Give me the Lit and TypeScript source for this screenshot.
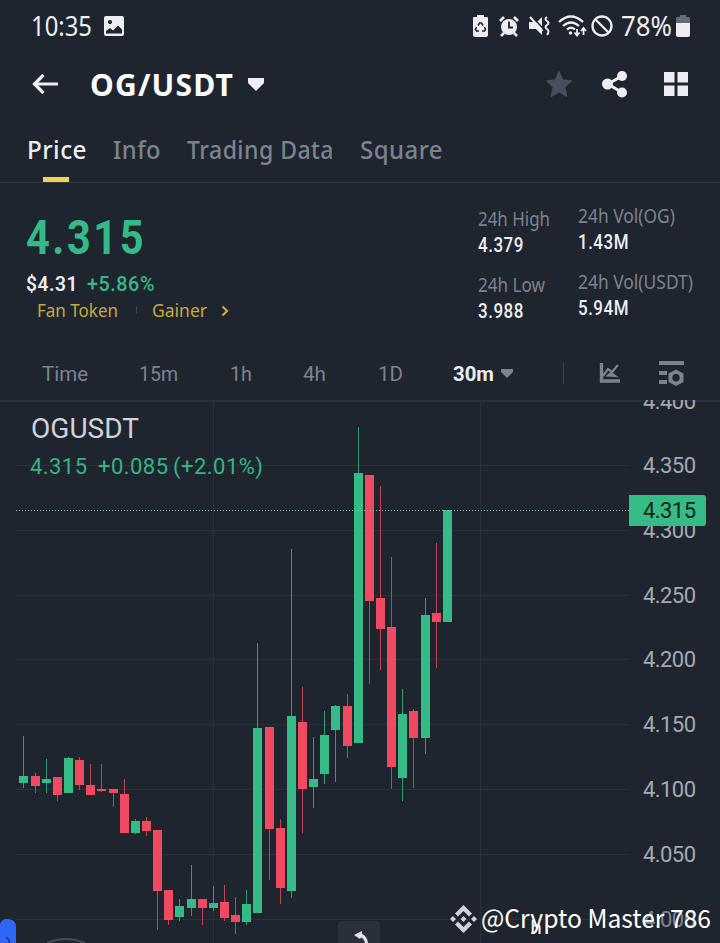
import { LitElement, html, svg, css, type TemplateResult } from "lit";
import { customElement } from "lit/decorators.js";

/** A line of text fitted to a width; the box is as high as its capitals, so its bottom is the baseline. */
const fit = (text: string, width: number, cap: number, cls = "") => html`
  <svg class="fit ${cls}" width=${width} height=${cap}>
    <text x="-1" y=${cap} font-size=${cap / 0.714} textLength=${width} lengthAdjust="spacingAndGlyphs">${text}</text>
  </svg>`;

const icon = (w: number, h: number, body: TemplateResult, cls = "") => html`
  <svg class="icon ${cls}" width=${w} height=${h} viewBox="0 0 ${w} ${h}">${body}</svg>`;

type Candle = [x: number, up: 0 | 1, top: number, bottom: number, high: number, low: number];

const CANDLES: Candle[] = [
  [19, 1, 776, 783, 736, 788], [31, 0, 776, 786, 773, 793], [42, 1, 779, 783, 759, 793],
  [53, 0, 777, 795, 777, 801], [64, 1, 758, 793, 757, 793], [75, 0, 760, 785, 757, 790],
  [86, 0, 785, 795, 764, 795], [97, 0, 789, 791, 764, 792], [109, 0, 789, 793, 789, 807],
  [120, 0, 794, 833, 779, 833], [131, 1, 821, 833, 819, 834], [142, 0, 821, 831, 817, 836],
  [153, 0, 830, 891, 830, 930], [164, 0, 890, 920, 890, 925], [175, 1, 906, 917, 899, 921],
  [187, 1, 899, 908, 865, 916], [198, 0, 899, 908, 899, 925], [209, 1, 903, 908, 886, 911],
  [220, 0, 902, 918, 885, 921], [231, 0, 915, 922, 897, 934], [242, 1, 904, 922, 890, 925],
  [253, 1, 728, 913, 643, 913], [265, 0, 727, 829, 727, 880], [276, 0, 828, 888, 819, 904],
  [287, 1, 716, 891, 549, 898], [298, 0, 722, 789, 687, 833], [309, 1, 779, 787, 737, 808],
  [320, 1, 735, 774, 711, 784], [331, 1, 706, 730, 705, 782], [343, 0, 706, 746, 694, 758],
  [354, 1, 473, 743, 427, 743], [365, 0, 475, 601, 475, 684], [376, 0, 598, 629, 486, 670],
  [387, 0, 627, 767, 557, 789], [398, 1, 714, 778, 689, 801], [409, 0, 711, 738, 709, 788],
  [421, 1, 615, 738, 598, 754], [432, 0, 613, 622, 543, 668], [443, 1, 510, 622, 510, 622],
];

const TICKS: [string, number][] = [
  ["4.400", 401], ["4.350", 465], ["4.300", 530], ["4.250", 595], ["4.200", 659],
  ["4.150", 724], ["4.100", 789], ["4.050", 854], ["4.000", 919],
];

@customElement("price-chart")
export class PriceChart extends LitElement {
  static styles = css`
    :host { display: block; height: 543px; overflow: hidden; }
    svg { display: block; font-family: Roboto, sans-serif; }
    .grid { fill: #2a3039; }
    .up { fill: #35bb85; }
    .down { fill: #ef4a60; }
    .wick { opacity: 0.8; }
    .tick { fill: #a4a9b3; font-size: 22px; }
    .tick.faint { fill: #7f858f; }
    .tag { fill: #12241f; font-size: 22px; }
    .name { fill: #d0d3d9; font-size: 28px; }
    .quote { fill: #35b483; font-size: 22px; }
    .last { stroke: #8fb5ac; stroke-dasharray: 1 2; }
  `;

  render() {
    return html`
      <svg width="720" height="543" viewBox="0 400 720 543">
        <rect x="0" y="400" width="720" height="2" class="grid" />
        ${TICKS.slice(1).map(([, y]) => svg`<rect class="grid" x="16" y=${y} width="613" height="1" />`)}
        <rect class="grid" x="213" y="401" width="1" height="542" />
        <rect class="grid" x="480" y="401" width="1" height="542" />
        ${TICKS.map(([label, y]) => svg`
          <text class="tick ${label === "4.000" ? "faint" : ""}" x="643" y=${y + 8.4} textLength="53">${label}</text>`)}
        ${CANDLES.map(([x, up, top, bottom, high, low]) => svg`
          <g class=${up ? "up" : "down"}>
            <rect class="wick" x=${x + 4} y=${high} width="1" height=${low - high} />
            <rect x=${x} y=${top} width="9" height=${bottom - top} />
          </g>`)}
        <line class="last" x1="16" y1="510.5" x2="629" y2="510.5" />
        <path class="up" d="M629 495h74a3 3 0 0 1 3 3v25a3 3 0 0 1-3 3h-74z" />
        <text class="tag" x="643" y="518.4" textLength="53">4.315</text>
        <text class="name" x="31" y="438" textLength="108">OGUSDT</text>
        <text class="quote" x="30" y="474" textLength="57">4.315</text>
        <text class="quote" x="98" y="474" textLength="70">+0.085</text>
        <text class="quote" x="173" y="474" textLength="90">(+2.01%)</text>
        <path d="M0 943v-19q2-5 6-5h3q7 1 7 8v16z" fill="#2f66f6" />
        <path d="M6 937q3 2 4 6" fill="none" stroke="#1b2d55" stroke-width="1.500" />
        <path d="M47 943q18-8 38 0" fill="none" stroke="#454c57" stroke-width="2" />
        <rect x="338" y="921" width="42" height="30" rx="4" fill="#2a303b" />
        <path d="M354 935l8-4v3q5 2 6 9h-3q-1-4.500-4-5.500l-1 1.500z" fill="#dfe2e8" />
      </svg>`;
  }
}

@customElement("app-root")
export class AppRoot extends LitElement {
  static styles = css`
    :host {
      display: block; position: relative; width: 720px; height: 943px; overflow: hidden;
      background: #1f252f; color: #eceef3; font-family: "Noto Sans", sans-serif;
    }
    svg { display: block; overflow: visible; fill: currentColor; }
    .din { font-family: Roboto, sans-serif; }
    .m { font-weight: 500; }
    .sb { font-weight: 600; }
    .b { font-weight: 700; }
    .spaced { letter-spacing: 0.6px; }
    .wide { letter-spacing: 3px; }
    .row { display: grid; align-items: center; }
    .status { height: 52px; padding-left: 32px; grid-template-columns: 72px 369px 26px 30px 30px 32px 31px 54px 14px; }
    .head { height: 64px; padding: 0 0 0 32px; grid-template-columns: 59px 157px 298px 56px 62px 30px; }
    .title { padding-top: 2px; letter-spacing: 1.2px; color: #fafbfd; }
    .star { color: #48505d; }
    .tabs {
      box-sizing: border-box; height: 67px; padding: 25px 0 0 28px; align-items: start; letter-spacing: 0.5px;
      grid-template-columns: 86px 74px 173px 90px; color: #7c838f; border-bottom: 1px solid #323943;
    }
    .tab { display: grid; gap: 18px; }
    .on { color: #eceef3; }
    .mark { width: 26px; height: 5px; margin-left: 15px; background: #f0d254; }
    .summary { display: grid; grid-template-columns: 452px 100px 130px; height: 163px; padding-left: 27px; }
    .up { color: #35b987; }
    .main { padding-top: 36px; }
    .sub { display: grid; grid-template-columns: 61px 70px; margin-top: 22px; }
    .tags { display: grid; grid-template-columns: 98px 17px 68px 10px; align-items: center; margin: 13px 0 0 11px; color: #c8a840; }
    .sep { width: 1px; height: 7px; background: #414751; }
    .stats { display: grid; align-content: start; padding-top: 28.5px; }
    .stats.vol { padding-top: 25.5px; }
    .stat + .stat { margin-top: 26px; }
    .stat { display: grid; gap: 12px; }
    .dim { color: #7c838f; }
    .frames {
      height: 54px; padding-left: 43px; color: #7c838f;
      grid-template-columns: 97px 91px 73px 75px 75px 47px 62px 37px 59px 26px;
    }
    .divider { width: 1px; height: 22px; background: #3a414c; }
    .credit {
      position: absolute; left: 450px; top: 905px; display: flex; align-items: center; gap: 5px;
      color: #fff; font-family: "Noto Sans CJK SC", sans-serif;
    }
    .logo { color: #cfd2da; }
    .glitch { position: absolute; left: 81px; top: 16px; }
  `;

  private stat(label: string, lw: number, value: string, vw: number) {
    return html`<div class="stat">
      ${fit(label, lw, 14, "dim")}
      ${fit(value, vw, 14, "din m spaced")}
    </div>`;
  }

  render() {
    return html`
      <div class="row status">
        ${fit("10:35", 61, 19)}
        ${icon(20, 20, svg`<path fill-rule="evenodd" d="M2 0h16a2 2 0 0 1 2 2v16a2 2 0 0 1-2 2H2a2 2 0 0 1-2-2V2a2 2 0 0 1 2-2zM6 4a2 2 0 1 0 0 4.200 2 2 0 0 0 0-4.200zM2 15v2.500h16v-4l-4-4-5 5-3-2.500z"/>`)}
        ${icon(15, 22, svg`<path d="M4 2V0h7v2h3q1 0 1 1v17q0 2-2 2H2q-2 0-2-2V3q0-1 1-1z"/>
          <path d="M5 10.500l1.500-2.500h2l1.500 2.500M11.500 12l1 2.500-1 1.500H9M6 16H3.500l-1-1.500 1-2.500" fill="none" stroke="#1f252f" stroke-width="1.600"/>`)}
        ${icon(20, 21, svg`<circle cx="10" cy="11" r="8"/>
          <path d="M1 5l4-4M19 5l-4-4M5 17l-3 3M15 17l3 3" stroke="currentColor" stroke-width="2.600"/>
          <path d="M10 5.500v6h4" fill="none" stroke="#1f252f" stroke-width="1.800"/>`)}
        ${icon(20, 20, svg`<path d="M0 6h4l3 1 6-6v18l-6-6H0z"/>
          <path d="M2.500 0L15 13.500" stroke="#1f252f" stroke-width="1.600"/>
          <path d="M1 1l12.500 14" stroke="currentColor" stroke-width="2"/>
          <path d="M18 1q-3 2 0 4t0 4 0 4 0 6" fill="none" stroke="currentColor" stroke-width="2"/>`)}
        ${icon(28, 22, svg`<g fill="none" stroke="currentColor" stroke-width="2.300">
            <path d="M0 7q12-11 24 0M4 11q8-7 16 0M8 14.500q4-3.500 8 0"/></g>
          <circle cx="11.500" cy="18" r="1.800"/>
          <path d="M18 14v6M15.500 17.500l2.500 3 2.500-3M24.500 20v-6.500M22 16l2.500-3 2.500 3" fill="none" stroke="currentColor" stroke-width="1.800"/>`)}
        ${icon(22, 22, svg`<g fill="none" stroke="currentColor" stroke-width="2.300"><circle cx="11" cy="11" r="9.500"/><path d="M4.500 4.500l13 13"/></g>`)}
        ${fit("78%", 51, 19)}
        ${icon(14, 22, svg`<path d="M4 2V0h6v2h3q1 0 1 1v5H0V3q0-1 1-1z" fill="#666c76"/><path d="M0 8h14v12q0 2-2 2H2q-2 0-2-2z"/>`)}
      </div>

      <div class="row head">
        ${icon(26, 20, svg`<path d="M26 10H3M11.500 1L2.500 10l9 9" fill="none" stroke="currentColor" stroke-width="3.200"/>`)}
        <div class="title">${fit("OG/USDT", 144, 22, "b")}</div>
        ${icon(16, 13, svg`<path d="M0 0h16v5l-8 8-8-8z"/>`)}
        ${icon(26, 26, svg`<path d="M13 1l3.500 8 8.500 1-6.500 6 2 9L13 20.500 5.500 25l2-9L1 10l8.500-1z" stroke="currentColor" stroke-linejoin="round" stroke-width="1.500"/>`, "star")}
        ${icon(26, 26, svg`<circle cx="5.500" cy="13" r="5.500"/><circle cx="20" cy="5" r="5"/><circle cx="20" cy="21.500" r="5"/><path d="M20 5L6 13l14 8.500" fill="none" stroke="currentColor" stroke-width="3"/>`)}
        ${icon(24, 24, svg`<path d="M0 0h10.500v10.500H0zM13.500 0H24v10.500H13.500zM0 13.500h10.500V24H0zM13.500 13.500H24V24H13.500z"/>`)}
      </div>

      <div class="row tabs">
        <div class="tab on">${fit("Price", 60, 18, "m")}<div class="mark"></div></div>
        ${fit("Info", 48, 18, "m")}
        ${fit("Trading Data", 147, 18, "m")}
        ${fit("Square", 83, 18, "m")}
      </div>

      <div class="summary">
        <div class="main">
          ${fit("4.315", 120, 35, "din up b wide")}
          <div class="sub">${fit("$4.31", 52, 15, "din sb spaced")}${fit("+5.86%", 68, 15, "din m up spaced")}</div>
          <div class="tags">
            ${fit("Fan Token", 81, 13)}<div class="sep"></div>${fit("Gainer", 55, 13)}
            ${icon(8, 10, svg`<path d="M1.500 0.500L6 5 1.500 9.500" fill="none" stroke="currentColor" stroke-width="2.200"/>`)}
          </div>
        </div>
        <div class="stats">${this.stat("24h High", 72, "4.379", 46)}${this.stat("24h Low", 67, "3.988", 46)}</div>
        <div class="stats vol">${this.stat("24h Vol(OG)", 97, "1.43M", 51)}${this.stat("24h Vol(USDT)", 115, "5.94M", 51)}</div>
      </div>

      <div class="row frames">
        ${fit("Time", 46, 15, "din")}
        ${fit("15m", 39, 15, "din")}
        ${fit("1h", 22, 15, "din")}
        ${fit("4h", 23, 15, "din")}
        ${fit("1D", 25, 15, "din")}
        ${fit("30m", 41, 15, "din on b")}
        ${icon(12, 9, svg`<path d="M0 0h12v3L6 9 0 3z"/>`)}
        <div class="divider"></div>
        ${icon(20, 20, svg`<path d="M1.500 0v18H20" fill="none" stroke="currentColor" stroke-width="3.400"/>
          <path d="M3 13l5-7 4 3 6-7M8 12.500l3-2.500 4 3z" fill="none" stroke="currentColor" stroke-width="2.200"/>`)}
        ${icon(25, 25, svg`<path d="M0 0h25v4H0zM0 10h8v4H0zM0 19h8v4H0z"/>
          <path fill-rule="evenodd" d="M17 8.500l7.500 4v8.500L17 25l-7.500-4v-8.500zM17 13a3.700 3.700 0 1 0 0 7.400 3.700 3.700 0 0 0 0-7.400z"/>`)}
      </div>

      <price-chart></price-chart>

      <div class="credit">
        ${icon(27, 28, svg`<path d="M13.500 0l8.500 8.500-3 3-5.500-5.500L8 11.500l-3-3zM13.500 28L22 19.500l-3-3-5.500 5.500L8 16.500l-3 3zM13.500 11l3 3-3 3-3-3zM3 11l3 3-3 3-3-3zM24 11l3 3-3 3-3-3z"/>`, "logo")}
        ${fit("@Crypto Master 786", 230, 18.3)}
        <div class="glitch">${fit("h", 12, 13)}</div>
      </div>`;
  }
}
